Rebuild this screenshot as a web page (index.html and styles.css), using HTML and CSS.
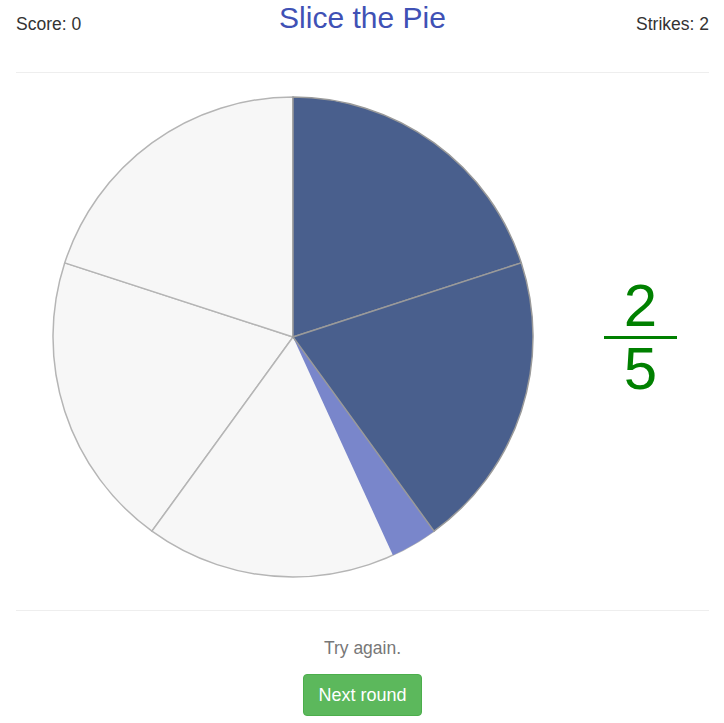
FILE: index.html
```html
<!DOCTYPE html>
<html lang="en">
<head>
    <meta charset="UTF-8">
    <meta name="viewport" content="width=device-width, initial-scale=1.0">
    <title>Slice the Pie</title>
    <link rel="stylesheet" href="styles.css">
</head>
<body>
    <div class="container">
        <div class="header">
            <div class="score">Score: 0</div>
            <h1>Slice the Pie</h1>
            <div class="strikes">Strikes: 2</div>
        </div>

        <div class="board">
            <svg class="pie" width="482" height="482" viewBox="0 0 482 482">
                <!-- empty slices -->
                <path class="slice" d="M241,241 L99.93,435.16 A240,240 0 0,1 12.75,166.84 Z"></path>
                <path class="slice" d="M241,241 L12.75,166.84 A240,240 0 0,1 241,1 Z"></path>
                <path class="slice" d="M241,241 L382.07,435.16 A240,240 0 0,1 99.93,435.16 Z"></path>
                <!-- the slice being dragged -->
                <path class="slice-drag" d="M241,241 L382.07,435.16 A240,240 0 0,1 340.9,459.2 Z"></path>
                <!-- filled slices -->
                <path class="slice filled" d="M241,241 L241,1 A240,240 0 0,1 469.25,166.84 Z"></path>
                <path class="slice filled" d="M241,241 L469.25,166.84 A240,240 0 0,1 382.07,435.16 Z"></path>
            </svg>

            <div class="fraction">
                <span class="num">2</span>
                <span class="bar"></span>
                <span class="den">5</span>
            </div>
        </div>

        <div class="footer">
            <p class="message">Try again.</p>
            <button type="button" class="btn-next">Next round</button>
        </div>
    </div>
</body>
</html>
```

FILE: styles.css
```css
body {
    font-family: "Liberation Sans", Arial, sans-serif;
    background-color: #fff;
    color: #333;
    margin: 0;
    padding: 0;
}

.container {
    padding: 0 15px 0 16px;
}

.header {
    display: grid;
    grid-template-columns: 1fr auto 1fr;
    align-items: start;
    height: 72px;
    border-bottom: 1px solid #eee;
}

.score,
.strikes {
    font-size: 17.5px;
    line-height: 20px;
    padding-top: 14px;
}

.strikes {
    text-align: right;
}

h1 {
    margin: 0;
    padding-top: 1px;
    font-size: 30px;
    line-height: 34px;
    font-weight: normal;
    color: #3f51b5;
}

.board {
    display: flex;
    align-items: center;
    padding: 23px 0 32px 36px;
    border-bottom: 1px solid #eee;
}

.pie {
    display: block;
}

.slice {
    fill: #f7f7f7;
    stroke: #b5b5b5;
    stroke-width: 1.5;
}

.slice.filled {
    fill: #495f8d;
    stroke: #9a9a9a;
}

.slice-drag {
    fill: #7986cb;
}

.fraction {
    display: flex;
    flex-direction: column;
    align-items: center;
    width: 73px;
    margin-left: 70px;
    color: green;
    font-size: 60px;
    line-height: 60px;
}

.bar {
    width: 100%;
    height: 3px;
    background-color: green;
}

.footer {
    text-align: center;
    padding-top: 26px;
}

.message {
    margin: 0 0 15px;
    font-size: 17.5px;
    line-height: 22px;
    color: #777;
}

.btn-next {
    font-family: inherit;
    font-size: 18px;
    line-height: 24px;
    padding: 8px 14px;
    color: #fff;
    background-color: #5cb85c;
    border: 1px solid #4cae4c;
    border-radius: 4px;
    cursor: pointer;
}

.btn-next:hover {
    background-color: #449d44;
}
```
